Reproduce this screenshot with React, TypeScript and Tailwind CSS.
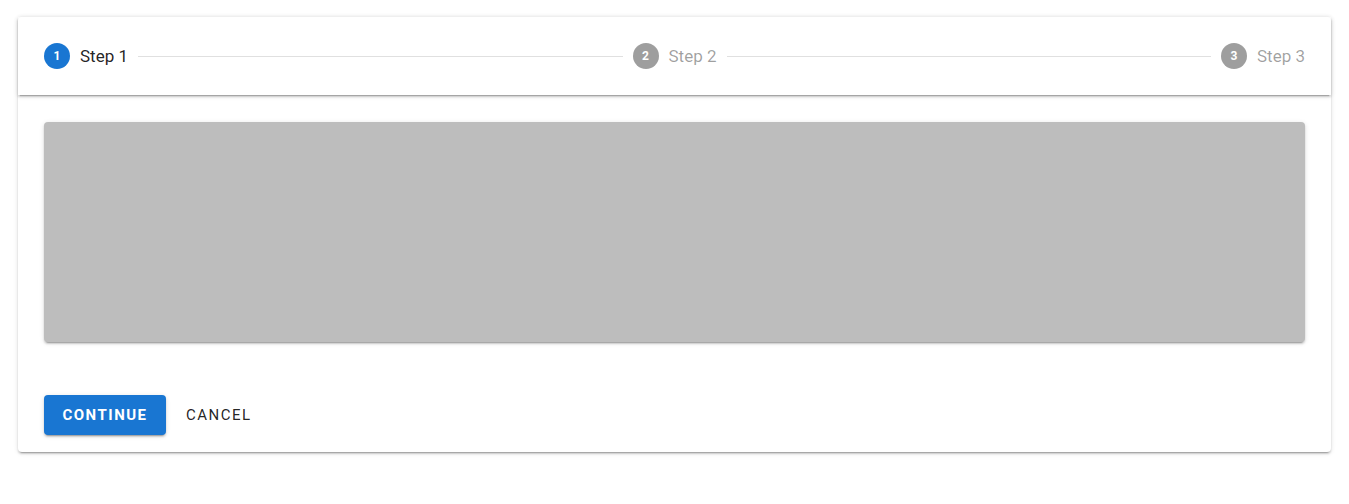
import React from "react";

const steps = [
  { n: 1, label: "Step 1", active: true },
  { n: 2, label: "Step 2", active: false },
  { n: 3, label: "Step 3", active: false },
];

function Step({ n, label, active }: { n: number; label: string; active: boolean }) {
  return (
    <div className="flex items-center px-[26px] shrink-0">
      <span
        className={`flex items-center justify-center w-[26px] h-[26px] rounded-full text-[12px] font-bold text-white mr-[10px] ${
          active ? "bg-[#1976d2]" : "bg-[#9e9e9e]"
        }`}
      >
        {n}
      </span>
      <span className={`text-[17px] leading-none ${active ? "text-black/[0.87]" : "text-black/[0.38]"}`}>{label}</span>
    </div>
  );
}

export default function App() {
  return (
    <div className="min-h-[504px] bg-white px-[18px] pt-[17px]" style={{ fontFamily: "Roboto, 'Liberation Sans', sans-serif" }}>
      <div className="rounded-[4px] bg-white shadow-[0_3px_1px_-2px_rgba(0,0,0,0.2),0_2px_2px_0_rgba(0,0,0,0.14),0_1px_5px_0_rgba(0,0,0,0.12)]">
        <div className="relative flex h-[78px] items-center shadow-[0_3px_1px_-2px_rgba(0,0,0,0.2),0_2px_2px_0_rgba(0,0,0,0.14),0_1px_5px_0_rgba(0,0,0,0.12)]">
          {steps.map((s, i) => (
            <React.Fragment key={s.n}>
              {i > 0 && <div className="flex-1 h-px bg-black/[0.12] -mx-4" />}
              <Step {...s} />
            </React.Fragment>
          ))}
        </div>
        <div className="px-[26px] pt-[27px] pb-[17px]">
          <div className="h-[220px] rounded-[4px] bg-[#bdbdbd] shadow-[0_3px_1px_-2px_rgba(0,0,0,0.2),0_2px_2px_0_rgba(0,0,0,0.14),0_1px_5px_0_rgba(0,0,0,0.12)]" />
          <div className="mt-[53px] flex items-center">
            <button className="h-[40px] w-[122px] rounded-[4px] bg-[#1976d2] text-white text-[15px] font-bold uppercase tracking-[0.1em] shadow-[0_3px_1px_-2px_rgba(0,0,0,0.2),0_2px_2px_0_rgba(0,0,0,0.14),0_1px_5px_0_rgba(0,0,0,0.12)]">
              Continue
            </button>
            <button className="ml-[4px] h-[40px] px-4 text-[15px] font-normal uppercase tracking-[0.1em] text-black/[0.87]">
              Cancel
            </button>
          </div>
        </div>
      </div>
    </div>
  );
}
